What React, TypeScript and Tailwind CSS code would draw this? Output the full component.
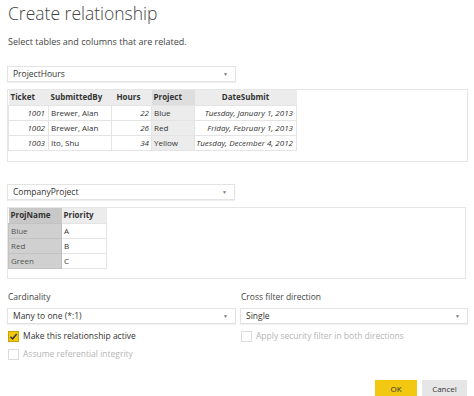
import React from 'react';

const font = { fontFamily: '"Open Sans", "Noto Sans", sans-serif' };

const Dropdown = ({ label, className = '' }: { label: string; className?: string }) => (
  <div className={`flex h-[16px] items-center justify-between border border-[#e3e3e3] bg-white pl-[5px] pr-[7px] shadow-[0_1px_1px_rgba(0,0,0,0.06)] ${className}`}>
    <span className="text-[8.5px] leading-none text-[#333]">{label}</span>
    <span className="text-[5px] leading-none text-[#777]">▼</span>
  </div>
);

const Checkbox = ({ checked, label, disabled }: { checked?: boolean; label: string; disabled?: boolean }) => (
  <div className="flex h-[14px] items-center gap-[4px]">
    <div
      className={`flex h-[11px] w-[11px] items-center justify-center border ${
        checked ? 'border-[#c9a400] bg-[#f2c811]' : 'border-[#dcdcdc] bg-white'
      }`}
    >
      {checked && (
        <svg width="9" height="9" viewBox="0 0 10 10">
          <path d="M1.5 5.2 L4 7.6 L8.6 2.2" fill="none" stroke="#333" strokeWidth="1.6" />
        </svg>
      )}
    </div>
    <span className={`text-[8.5px] leading-none ${disabled ? 'text-[#b5b5b5]' : 'text-[#333]'}`}>{label}</span>
  </div>
);

const hoursRows = [
  { ticket: '1001', by: 'Brewer, Alan', hours: '22', project: 'Blue', date: 'Tuesday, January 1, 2013' },
  { ticket: '1002', by: 'Brewer, Alan', hours: '26', project: 'Red', date: 'Friday, February 1, 2013' },
  { ticket: '1003', by: 'Ito, Shu', hours: '34', project: 'Yellow', date: 'Tuesday, December 4, 2012' },
];

const projectRows = [
  { name: 'Blue', priority: 'A' },
  { name: 'Red', priority: 'B' },
  { name: 'Green', priority: 'C' },
];

const App = () => {
  return (
    <div className="h-[396px] w-[474px] overflow-hidden bg-white pl-[7px] pr-[6px]" style={font}>
      {/* Header */}
      <h1 className="pl-[1px] pt-[1px] text-[17.5px] font-light leading-[24px] text-[#444]">Create relationship</h1>
      <p className="mt-[11px] pl-[1px] text-[9px] leading-[12px] text-[#444]">Select tables and columns that are related.</p>

      {/* First table */}
      <Dropdown label="ProjectHours" className="mt-[18px] w-[229px]" />
      <div className="mt-[7px] h-[73px] w-[461px] border border-[#e6e6e6]">
        <table className="border-collapse text-[8px] leading-none text-[#333]">
          <thead>
            <tr className="h-[15px] bg-[#ececec] font-semibold">
              <th className="w-[40px] pl-[2px] text-left">Ticket</th>
              <th className="w-[63px] pl-[2px] text-left">SubmittedBy</th>
              <th className="w-[40px] pl-[5px] text-left">Hours</th>
              <th className="w-[43px] bg-[#dedede] pl-[2px] text-left">Project</th>
              <th className="w-[102px] text-center">DateSubmit</th>
            </tr>
          </thead>
          <tbody>
            {hoursRows.map((r) => (
              <tr key={r.ticket} className="h-[15px]">
                <td className="border border-[#e4e4e4] pr-[3px] text-right italic">{r.ticket}</td>
                <td className="border border-[#e4e4e4] pl-[2px]">{r.by}</td>
                <td className="border border-[#e4e4e4] pr-[2px] text-right italic">{r.hours}</td>
                <td className="border border-[#e4e4e4] bg-[#ececec] pl-[2px]">{r.project}</td>
                <td className="border border-[#e4e4e4] pr-[3px] text-right italic">{r.date}</td>
              </tr>
            ))}
          </tbody>
        </table>
      </div>

      {/* Second table */}
      <Dropdown label="CompanyProject" className="mt-[22px] w-[228px]" />
      <div className="mt-[7px] h-[72px] w-[459px] border border-[#e6e6e6]">
        <table className="border-collapse text-[8px] leading-none text-[#333]">
          <thead>
            <tr className="h-[15px] font-semibold">
              <th className="w-[53px] bg-[#c8c8c8] pl-[2px] text-left">ProjName</th>
              <th className="w-[45px] bg-[#ececec] pl-[2px] text-left">Priority</th>
            </tr>
          </thead>
          <tbody>
            {projectRows.map((r) => (
              <tr key={r.name} className="h-[15px]">
                <td className="border border-[#c2c2c2] bg-[#d0d0d0] pl-[2px] text-[#555]">{r.name}</td>
                <td className="border border-[#e4e4e4] pl-[2px]">{r.priority}</td>
              </tr>
            ))}
          </tbody>
        </table>
      </div>

      {/* Options */}
      <div className="mt-[12px] grid grid-cols-[229px_228px] gap-x-[4px]">
        <div>
          <div className="pl-[1px] text-[8.5px] leading-[12px] text-[#444]">Cardinality</div>
          <Dropdown label="Many to one (*:1)" className="mt-[5px]" />
          <div className="mt-[5px] flex flex-col gap-[4px] pl-[1px]">
            <Checkbox checked label="Make this relationship active" />
            <Checkbox disabled label="Assume referential integrity" />
          </div>
        </div>
        <div>
          <div className="pl-[1px] text-[8.5px] leading-[12px] text-[#444]">Cross filter direction</div>
          <Dropdown label="Single" className="mt-[5px]" />
          <div className="mt-[5px] pl-[1px]">
            <Checkbox disabled label="Apply security filter in both directions" />
          </div>
        </div>
      </div>

      {/* Buttons */}
      <div className="mt-[19px] flex justify-end gap-[5px] pr-[1px]">
        <button className="h-[17px] w-[42px] bg-[#f2c811] text-[8px] text-[#333]">OK</button>
        <button className="h-[17px] w-[45px] bg-[#e6e6e6] text-[8px] text-[#333]">Cancel</button>
      </div>
    </div>
  );
};

export default App;
